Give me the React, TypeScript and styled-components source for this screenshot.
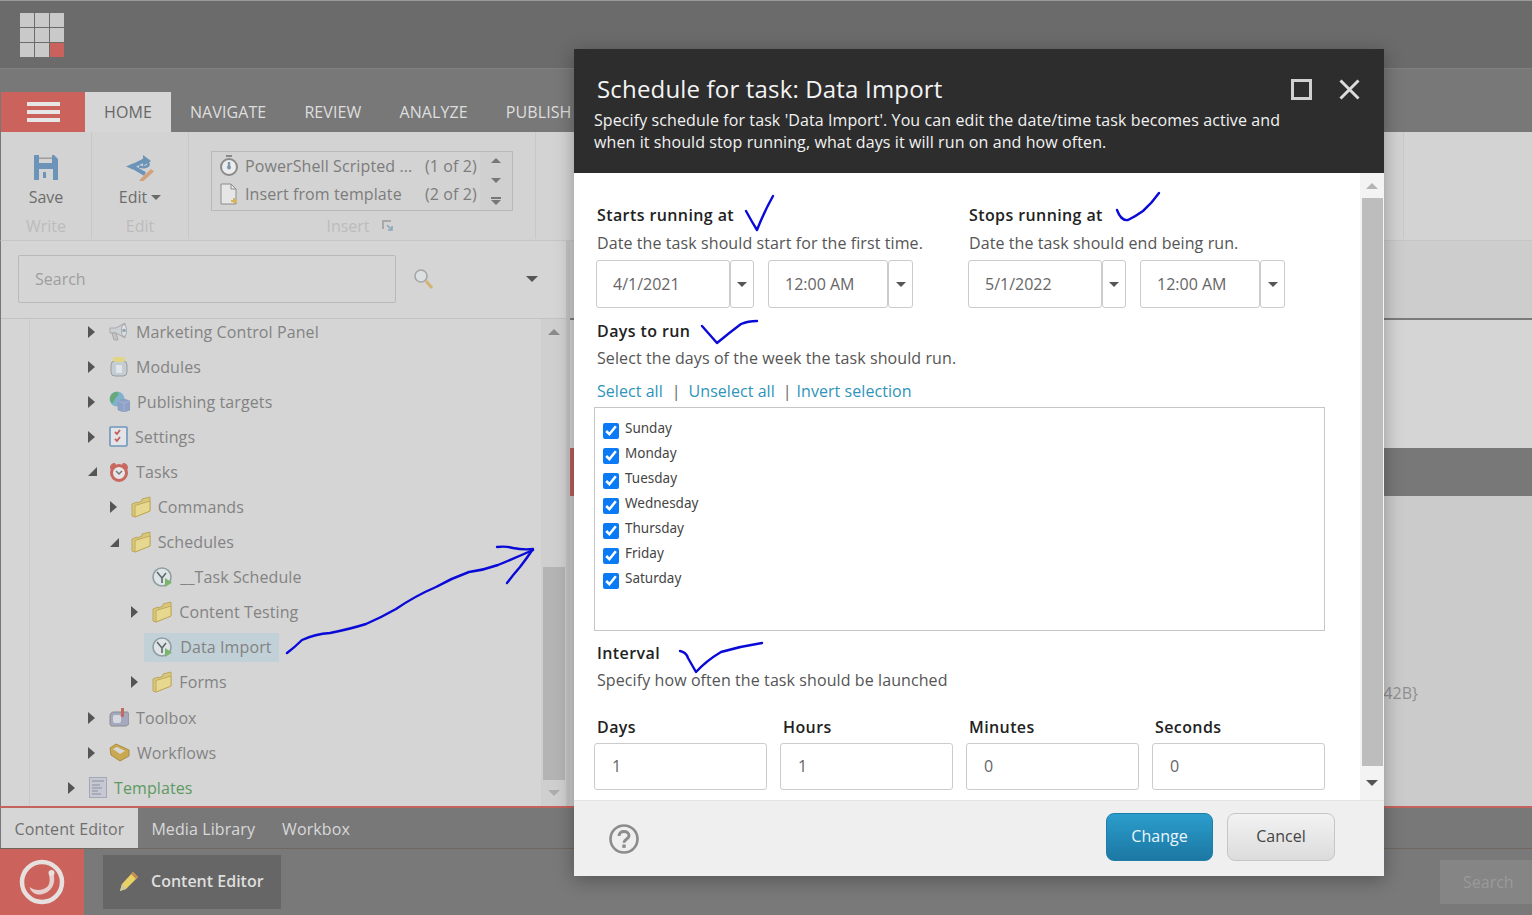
import React from "react";
import styled, { createGlobalStyle } from "styled-components";

const Global = createGlobalStyle`
  html, body { margin: 0; padding: 0; background: #787878; }
  body { font-family: "Open Sans", "Noto Sans", sans-serif; overflow: hidden; }
  * { box-sizing: border-box; }
`;

const Page = styled.div`
  position: relative;
  width: 1532px;
  height: 915px;
  overflow: hidden;
  display: flex;
  flex-direction: column;
  font-size: 16px;
`;

/* ---------- top bar ---------- */
const TopBar = styled.header`
  height: 69px;
  flex: none;
  background: #6b6b6b;
  border-top: 1px solid #9a9a9a;
  border-bottom: 1px solid #808080;
  padding: 12px 0 0 20px;
`;
const LauncherGrid = styled.div`
  display: grid;
  grid-template-columns: repeat(3, 14px);
  grid-template-rows: repeat(3, 14px);
  gap: 1px;
`;
const LauncherCell = styled.span<{ $accent?: boolean }>`
  background: ${(p) => (p.$accent ? "#c9625c" : "#c9c9c9")};
`;

/* ---------- ribbon tabs ---------- */
const TabStrip = styled.nav`
  height: 63px;
  flex: none;
  background: #787878;
  display: flex;
  align-items: flex-end;
  padding-left: 1px;
`;
const MenuButton = styled.div`
  width: 84px;
  height: 40px;
  background: #cb635c;
  display: flex;
  flex-direction: column;
  justify-content: center;
  align-items: center;
  gap: 4px;
`;
const MenuBar = styled.span`
  width: 33px;
  height: 4px;
  background: #e6e6e6;
`;
const RibbonTab = styled.div<{ $active?: boolean }>`
  height: 40px;
  display: flex;
  align-items: center;
  padding: 0 19px;
  font-size: 16px;
  letter-spacing: 0.1px;
  color: ${(p) => (p.$active ? "#666" : "#dedede")};
  background: ${(p) => (p.$active ? "#d6d6d6" : "transparent")};
`;

/* ---------- ribbon ---------- */
const Ribbon = styled.section`
  height: 109px;
  flex: none;
  background: #d3d3d3;
  border-left: 1px solid #777;
  border-bottom: 1px solid #c6c6c6;
  display: flex;
`;
const RibbonGroup = styled.div<{ $w: number }>`
  width: ${(p) => p.$w}px;
  flex: none;
  display: flex;
  flex-direction: column;
  align-items: center;
  border-right: 1px solid #c8c8c8;
  height: 107px;
`;
const RibbonBig = styled.div`
  flex: 1;
  display: flex;
  flex-direction: column;
  align-items: center;
  padding-top: 22px;
  color: #6d6d6d;
  line-height: 22px;
  gap: 5px;
`;
const GroupLabel = styled.div<{ $shift?: number }>`
  color: #bcbcbc;
  line-height: 22px;
  height: 27px;
  display: flex;
  align-items: center;
  gap: 12px;
  padding-right: ${(p) => p.$shift ?? 0}px;
`;
const Caret = styled.span<{ $size?: number; $color?: string; $up?: boolean }>`
  display: inline-block;
  width: 0;
  height: 0;
  border-left: ${(p) => p.$size ?? 5}px solid transparent;
  border-right: ${(p) => p.$size ?? 5}px solid transparent;
  ${(p) =>
    p.$up
      ? `border-bottom: ${p.$size ?? 5}px solid ${p.$color ?? "#6a6a6a"};`
      : `border-top: ${p.$size ?? 5}px solid ${p.$color ?? "#6a6a6a"};`}
`;
const EditLine = styled.span`
  display: inline-flex;
  align-items: center;
  gap: 4px;
`;
const Gallery = styled.div`
  width: 302px;
  height: 60px;
  margin: 19px 0 0 0;
  border: 1px solid #b9b9b9;
  display: flex;
`;
const GalleryList = styled.div`
  flex: 1;
  padding: 0 0 0 7px;
`;
const GalleryRow = styled.div`
  height: 28px;
  display: flex;
  align-items: center;
  color: #7c7c7c;
  letter-spacing: 0.1px;
`;
const GalleryName = styled.span`
  width: 180px;
  margin-left: 6px;
  white-space: nowrap;
`;
const GalleryArrows = styled.div`
  width: 32px;
  display: flex;
  flex-direction: column;
  align-items: center;
  justify-content: space-between;
  padding: 6px 0 5px;
  background: #d0d0d0;
`;
const MoreArrow = styled.span`
  display: flex;
  flex-direction: column;
  align-items: center;
  gap: 1px;
`;
const MoreBar = styled.span`
  width: 10px;
  height: 2px;
  background: #777;
`;
const InsertGroup = styled.div`
  flex: 1;
  display: flex;
  flex-direction: column;
  align-items: center;
`;
const Spacer = styled.div`
  flex: 1;
`;

/* ---------- main ---------- */
const Main = styled.main`
  height: 567px;
  flex: none;
  display: flex;
  border-bottom: 2px solid #c4635d;
`;
const LeftPane = styled.div`
  width: 566px;
  flex: none;
  border-left: 1px solid #777;
  background: #d5d5d5;
  display: flex;
  flex-direction: column;
`;
const SearchRow = styled.div`
  height: 78px;
  flex: none;
  display: flex;
  align-items: center;
  padding: 0 0 2px 17px;
  border-bottom: 1px solid #c2c2c2;
`;
const SearchBox = styled.div`
  width: 378px;
  height: 48px;
  border: 1px solid #b9b9b9;
  border-radius: 2px;
  display: flex;
  align-items: center;
  padding-left: 16px;
  color: #9e9e9e;
`;
const SearchIconWrap = styled.div`
  margin-left: 17px;
  display: flex;
`;
const SearchCaret = styled.div`
  margin-left: 92px;
  display: flex;
`;
const TreeWrap = styled.div`
  flex: 1;
  min-height: 0;
  display: flex;
  overflow: hidden;
`;
const Tree = styled.div`
  flex: 1;
  margin-left: 28px;
  border-left: 1px solid #cbcbcb;
  padding-top: 0;
  overflow: hidden;
`;
const TreeList = styled.div`
  margin-top: -5px;
`;
const indents = [0, 37, 57, 78.7, 100.3];
const Row = styled.div<{ $depth: number }>`
  height: 35.1px;
  display: flex;
  align-items: center;
  padding-left: ${(p) => indents[p.$depth]}px;
`;
const Expander = styled.span`
  width: 22px;
  flex: none;
  display: flex;
  align-items: center;
  padding-left: 1px;
`;
const ArrowRight = styled.span`
  width: 0;
  height: 0;
  border-top: 6px solid transparent;
  border-bottom: 6px solid transparent;
  border-left: 7px solid #555;
`;
const ArrowOpen = styled.span`
  width: 0;
  height: 0;
  border-left: 9px solid transparent;
  border-bottom: 9px solid #555;
`;
const RowBody = styled.div<{ $selected?: boolean }>`
  display: flex;
  align-items: center;
  gap: 7px;
  height: 29px;
  margin-left: ${(p) => (p.$selected ? "-8px" : "0")};
  padding: ${(p) => (p.$selected ? "0 7px 0 8px" : "0")};
  background: ${(p) => (p.$selected ? "#c1d1d7" : "transparent")};
`;
const RowText = styled.span<{ $green?: boolean }>`
  color: ${(p) => (p.$green ? "#5c9a62" : "#838383")};
  white-space: nowrap;
  letter-spacing: 0.1px;
`;
const ScrollTrack = styled.div<{ $width: number; $bg: string }>`
  width: ${(p) => p.$width}px;
  flex: none;
  display: flex;
  flex-direction: column;
  align-items: center;
  background: ${(p) => p.$bg};
`;
const ScrollEnd = styled.div<{ $h: number }>`
  height: ${(p) => p.$h}px;
  flex: none;
  display: flex;
  align-items: center;
  justify-content: center;
`;
const ScrollThumb = styled.div<{ $h: number; $bg: string }>`
  width: calc(100% - 3px);
  height: ${(p) => p.$h}px;
  flex: none;
  background: ${(p) => p.$bg};
`;
const Splitter = styled.div`
  width: 4px;
  flex: none;
  background: #c4c4c4;
`;
const RightPane = styled.div`
  flex: 1;
  display: flex;
  flex-direction: column;
  background: #cbcbcb;
`;
const EditorHead = styled.div`
  height: 79px;
  flex: none;
  background: #cdcdcd;
  border-bottom: 2px solid #7b7b7b;
`;
const EditorBlock = styled.div`
  height: 128px;
  flex: none;
  background: #d5d5d5;
`;
const EditorBand = styled.div`
  height: 48px;
  flex: none;
  background: #787878;
  border-left: 4px solid #bb5f5a;
`;
const EditorFields = styled.div`
  flex: 1;
  padding: 186px 114px 0 0;
  text-align: right;
  color: #8f8f8f;
  font-size: 16px;
  line-height: 22px;
`;

/* ---------- bottom ---------- */
const BottomTabs = styled.div`
  height: 41px;
  flex: none;
  background: #787878;
  border-bottom: 1px solid #6f675f;
  padding-left: 1px;
  display: flex;
`;
const BottomTab = styled.div<{ $active?: boolean }>`
  height: 40px;
  display: flex;
  align-items: center;
  padding: 2px 13.5px 0;
  letter-spacing: 0.1px;
  color: ${(p) => (p.$active ? "#707070" : "#d8d8d8")};
  background: ${(p) => (p.$active ? "#d6d6d6" : "transparent")};
`;
const TaskBar = styled.footer`
  flex: 1;
  background: #797979;
  display: flex;
  align-items: center;
`;
const StartTile = styled.div`
  width: 84px;
  height: 100%;
  background: #cb635c;
  display: flex;
  align-items: center;
  justify-content: center;
`;
const TaskItem = styled.div`
  margin-left: 19px;
  width: 178px;
  height: 54px;
  background: #666;
  color: #dedede;
  font-weight: 600;
  display: flex;
  align-items: center;
  padding: 0 0 2px 16px;
  gap: 12px;
`;
const TaskSearch = styled.div`
  margin-left: auto;
  width: 92px;
  height: 44px;
  margin-top: 0;
  background: #858585;
  color: #9a9a9a;
  padding-left: 23px;
  display: flex;
  align-items: center;
`;

/* ---------- dialog ---------- */
const Dialog = styled.div`
  position: absolute;
  left: 574px;
  top: 49px;
  width: 810px;
  height: 827px;
  display: flex;
  flex-direction: column;
  background: #fff;
  box-shadow: 0 4px 18px rgba(0, 0, 0, 0.3);
`;
const DialogHeader = styled.div`
  height: 124px;
  flex: none;
  background: #2d2d2d;
  color: #fff;
  padding: 24px 24px 0 20px;
`;
const TitleRow = styled.div`
  display: flex;
  align-items: center;
  height: 32px;
`;
const Title = styled.h1`
  flex: 1;
  margin: 0 0 0 3px;
  font-size: 24px;
  font-weight: 400;
  line-height: 32px;
  letter-spacing: 0.17px;
  color: #f4f4f4;
`;
const WindowButtons = styled.div`
  display: flex;
  gap: 27px;
`;
const SquareButton = styled.div`
  width: 21px;
  height: 21px;
  border: 3px solid #d0d0d0;
`;
const HeaderText = styled.p`
  margin: 4px 0 0;
  width: 700px;
  font-size: 16px;
  line-height: 22px;
  color: #f2f2f2;
  letter-spacing: 0.095px;
`;
const DialogBody = styled.div`
  flex: 1;
  min-height: 0;
  display: flex;
`;
const Form = styled.div`
  flex: 1;
  padding: 31px 35px 0 20px;
  font-size: 16px;
  line-height: 22px;
`;
const Columns = styled.div`
  display: grid;
  grid-template-columns: 372px 1fr;
  margin-left: 2px;
`;
const Heading = styled.h2<{ $inset?: number; $top?: number }>`
  margin: ${(p) => p.$top ?? 0}px 0 0 ${(p) => p.$inset ?? 3}px;
  font-size: 16px;
  font-weight: 600;
  line-height: 22px;
  letter-spacing: 0.4px;
  color: #222;
`;
const Help = styled.p<{ $inset?: number; $top?: number }>`
  margin: ${(p) => p.$top ?? 5}px 0 0 ${(p) => p.$inset ?? 3}px;
  color: #555;
  font-size: 16px;
  line-height: 22px;
  letter-spacing: 0.09px;
`;
const PickerRow = styled.div`
  display: flex;
  margin-top: 6px;
  gap: 14px;
`;
const Picker = styled.div`
  display: flex;
`;
const PickerInput = styled.input<{ $w: number }>`
  width: ${(p) => p.$w}px;
  height: 48px;
  border: 1px solid #ccc;
  border-radius: 3px;
  padding: 0 0 0 16px;
  font: 400 16px "Open Sans", sans-serif;
  color: #666;
  background: #fff;
  outline: none;
`;
const PickerButton = styled.div<{ $w: number }>`
  width: ${(p) => p.$w}px;
  height: 48px;
  border: 1px solid #ccc;
  border-radius: 3px;
  display: flex;
  align-items: center;
  justify-content: center;
`;
const LinkRow = styled.div`
  margin: 11px 0 0 3px;
  display: flex;
  height: 22px;
`;
const TextLink = styled.a`
  color: #2f94b9;
  letter-spacing: 0.05px;
`;
const Sep = styled.span<{ $l: number; $r: number }>`
  margin: 0 ${(p) => p.$r}px 0 ${(p) => p.$l}px;
  color: #666;
`;
const DayBox = styled.div`
  margin-top: 5px;
  height: 224px;
  width: 731px;
  border: 1px solid #c6c6c6;
  padding: 8px 0 0 8px;
`;
const DayRow = styled.label`
  display: flex;
  height: 25px;
  gap: 6px;
  font: 400 13.5px/24px "Noto Sans", "Open Sans", sans-serif;
  color: #444;
`;
const DayCheck = styled.input`
  width: 16px;
  height: 16px;
  margin: 7px 0 0 0;
  accent-color: #0b7bf5;
`;
const IntervalGrid = styled.div`
  display: grid;
  grid-template-columns: repeat(4, 173px);
  column-gap: 13px;
  width: 731px;
  margin-top: 25px;
`;
const IntervalLabel = styled.div`
  font-weight: 600;
  letter-spacing: 0.4px;
  color: #222;
  margin-left: 3px;
`;
const IntervalInput = styled.input`
  display: block;
  width: 173px;
  height: 47px;
  margin-top: 5px;
  border: 1px solid #ccc;
  border-radius: 3px;
  padding: 0 0 2px 17px;
  font: 400 16px "Open Sans", sans-serif;
  color: #666;
  outline: none;
`;
const DialogFooter = styled.div`
  height: 76px;
  flex: none;
  background: #efefef;
  border-top: 1px solid #e4e4e4;
  display: flex;
  align-items: center;
  padding: 0 49px 4px 35px;
`;
const HelpSlot = styled.div`
  display: flex;
  margin-top: 4px;
`;
const FootButton = styled.button<{ $primary?: boolean }>`
  width: ${(p) => (p.$primary ? 107 : 108)}px;
  height: 48px;
  border-radius: 8px;
  padding: 0 0 1px;
  margin-left: ${(p) => (p.$primary ? "auto" : "14px")};
  border: 1px solid ${(p) => (p.$primary ? "#1f7ea9" : "#c6c6c6")};
  background: ${(p) =>
    p.$primary
      ? "linear-gradient(#2b9dcc, #1c77a3)"
      : "linear-gradient(#f2f2f2, #dcdcdc)"};
  color: ${(p) => (p.$primary ? "#eaf6fb" : "#444")};
  font: 400 16px "Open Sans", sans-serif;
`;
const Annotations = styled.svg`
  position: absolute;
  inset: 0;
  width: 1532px;
  height: 915px;
  pointer-events: none;
`;

/* ---------- icons ---------- */
const SaveIcon = () => (
  <svg width="26" height="27" viewBox="0 0 26 27">
    <path d="M1 1h20l4 4v21H1z" fill="#6b94b8" />
    <rect x="6" y="1" width="13" height="8" fill="#d3d3d3" />
    <rect x="6" y="3.5" width="13" height="1.4" fill="#9a9a9a" />
    <rect x="6" y="15" width="14" height="11" fill="#d3d3d3" />
    <rect x="10" y="18" width="3" height="6" fill="#6b94b8" />
  </svg>
);
const EditIcon = () => (
  <svg width="30" height="27" viewBox="0 0 30 27">
    <path d="M18 1l8 6-8 5z" fill="#6b94b8" />
    <path d="M21 5.500L7 12.500L20 20" fill="none" stroke="#6b94b8" strokeWidth="4" />
    <path d="M20 6C27 10 23 15 14 12.500" fill="none" stroke="#6b94b8" strokeWidth="2.600" />
    <path d="M1 12.500l7-3v6z" fill="#6b94b8" />
    <path d="M15 25.500L26 15l3 2.500L18.500 27l-4 .5z" fill="#d2a27c" />
  </svg>
);
const StopwatchIcon = () => (
  <svg width="20" height="22" viewBox="0 0 20 22">
    <rect x="7" y="0" width="6" height="2" fill="#8a8a8a" />
    <circle cx="10" cy="12" r="8" fill="#ececec" stroke="#8a8a8a" strokeWidth="2" />
    <path d="M10 7v5" stroke="#7b97b0" strokeWidth="2.4" />
    <circle cx="10" cy="12.5" r="2" fill="#7b97b0" />
  </svg>
);
const DocIcon = () => (
  <svg width="20" height="22" viewBox="0 0 20 22">
    <path d="M2 1h10l5 5v15H2z" fill="#e6e6e6" stroke="#8c8c8c" />
    <path d="M12 1v5h5" fill="none" stroke="#8c8c8c" />
    <path d="M15 15v6M12 18h6" stroke="#d9b45a" strokeWidth="2" />
  </svg>
);
const MagnifierIcon = () => (
  <svg width="21" height="22" viewBox="0 0 21 22">
    <circle cx="8" cy="8" r="6" fill="#dce0e2" stroke="#a6a6a6" strokeWidth="1.6" />
    <path d="M13 13l6 7" stroke="#d5b473" strokeWidth="3" />
  </svg>
);
const LauncherIcon = () => (
  <svg width="11" height="11" viewBox="0 0 11 11">
    <path d="M1 9V1h8" fill="none" stroke="#a9a9a9" strokeWidth="2" />
    <path d="M5 5l5 5M10 6v4H6" fill="none" stroke="#8fa7b8" strokeWidth="1.6" />
  </svg>
);
const Folder = () => (
  <svg width="20" height="22" viewBox="0 0 20 22">
    <path d="M1 8l5-2v1l5-2V3l8-2v14L4 21l-3-1z" fill="#d8c878" stroke="#bda75f" />
    <path d="M4 9.500L19 5v10L4 21z" fill="#e6d98f" stroke="#c1a95f" />
  </svg>
);
const Megaphone = () => (
  <svg width="20" height="20" viewBox="0 0 20 20">
    <path d="M1 6h6l9-5v15L7 11H1z" fill="#cdd1d4" stroke="#a8a8a8" />
    <path d="M3 11l2 7h4l-2-7z" fill="#c2c4c6" stroke="#a8a8a8" />
    <ellipse cx="15" cy="8.500" rx="2.500" ry="6" fill="#e2e4e6" stroke="#a3a8ae" />
    <circle cx="15" cy="8.500" r="1.800" fill="#8ea4b8" />
  </svg>
);
const Jar = () => (
  <svg width="20" height="21" viewBox="0 0 20 21">
    <rect x="2" y="5" width="16" height="15" rx="4" fill="#c4ccd4" stroke="#9c9c9c" />
    <rect x="4" y="1" width="12" height="5" rx="2" fill="#e2d584" />
    <rect x="7" y="9" width="6" height="8" rx="1" fill="#e2e6ea" />
  </svg>
);
const GlobeCube = () => (
  <svg width="21" height="21" viewBox="0 0 21 21">
    <circle cx="8" cy="8" r="7.5" fill="#7fb2cc" />
    <path d="M1 8c0-4 3-7 7-7 2 1 2 4-1 5-1 2-2 4-3 6-2 0-3-2-3-4z" fill="#67a878" />
    <path d="M9 10l6-2 6 2v9l-6 2-6-2z" fill="#8ea2c8" stroke="#8a96b0" strokeWidth="0.6" />
    <path d="M9 10l6 2 6-2M15 12v9" fill="none" stroke="#a9b8d6" strokeWidth="0.8" />
  </svg>
);
const Checklist = () => (
  <svg width="19" height="21" viewBox="0 0 19 21">
    <rect x="1" y="1" width="17" height="19" rx="1" fill="#e2e4e8" stroke="#6e96bb" strokeWidth="1.6" />
    <path d="M6 6l2 2 3-4M6 13l2 2 3-4" fill="none" stroke="#c4605c" strokeWidth="1.8" />
  </svg>
);
const AlarmClock = () => (
  <svg width="20" height="20" viewBox="0 0 20 20">
    <path d="M1 6c0-3 2-5 5-5l1 2-5 5zM19 6c0-3-2-5-5-5l-1 2 5 5z" fill="#c9685e" />
    <circle cx="10" cy="11" r="7.500" fill="#e6e6e6" stroke="#c9685e" strokeWidth="3" />
    <path d="M7 9l3 3 3-3" fill="none" stroke="#777" strokeWidth="1.500" />
  </svg>
);
const ScheduleIcon = () => (
  <svg width="21" height="21" viewBox="0 0 21 21">
    <circle cx="10" cy="10" r="9" fill="#dfe5e6" stroke="#8f9ea3" strokeWidth="1.6" />
    <path d="M5 5l5 6 4-5M10 11v5" fill="none" stroke="#5d6a70" strokeWidth="1.6" />
    <path d="M13 11l7 4.5-7 4.5z" fill="#7bb56d" />
  </svg>
);
const MailBox = () => (
  <svg width="20" height="20" viewBox="0 0 20 20">
    <path d="M1 8c0-3 2-4 4-4h13c1 0 2 1 2 3v9l-3 2H3c-2 0-2-2-2-3z" fill="#a5a9c0" stroke="#8a8a8a" />
    <rect x="4" y="7" width="8" height="8" rx="2" fill="#d6d8e0" />
    <rect x="12" y="0" width="3" height="9" fill="#c4695f" />
  </svg>
);
const Tray = () => (
  <svg width="21" height="19" viewBox="0 0 21 19">
    <path d="M1 5L7 1l13 6v6l-9 5-9-6z" fill="#c9a850" stroke="#a88d46" />
    <path d="M4 6l4-2 8 4-5 3z" fill="#d6d6d6" />
  </svg>
);
const TemplateDoc = () => (
  <svg width="18" height="21" viewBox="0 0 18 21">
    <rect x="0.5" y="0.5" width="17" height="20" fill="#c6c9d4" stroke="#a3a7b6" />
    <path d="M3 4h12M3 8h8M3 11h10M3 14h6M3 17h9" stroke="#8b8f9c" strokeWidth="1.2" />
  </svg>
);
const Pencil = () => (
  <svg width="20" height="21" viewBox="0 0 20 21">
    <path d="M1 20l2-7L14 1l5 5L7 18z" fill="#e8d266" />
    <path d="M1 20l2-7 4 5z" fill="#cfc6a4" />
    <path d="M14 1l5 5-2 2-5-5z" fill="#c9884f" />
  </svg>
);
const SitecoreLogo = () => (
  <svg width="46" height="46" viewBox="0 0 46 46">
    <circle cx="23" cy="23" r="20" fill="none" stroke="#e6e0df" strokeWidth="4.500" />
    <path d="M34 14C38 24 32 34 22 35.500C16 36 12 33 10.500 28C16 32 24 32 29 27C31 24 31 19 30 16Z" fill="#e6cfcc" />
    <circle cx="32.500" cy="14" r="3" fill="#e6e0df" />
  </svg>
);
const CloseIcon = () => (
  <svg width="21" height="21" viewBox="0 0 21 21">
    <path d="M1.5 1.5l18 18M19.5 1.5l-18 18" stroke="#dcdcdc" strokeWidth="3" />
  </svg>
);
const HelpIcon = () => (
  <svg width="30" height="30" viewBox="0 0 30 30">
    <circle cx="15" cy="15" r="13.5" fill="none" stroke="#8c8c8c" strokeWidth="2.6" />
    <path d="M10 12c0-3 2.300-4.500 5-4.500s5 1.600 5 4.200c0 3.600-5 3.600-5 7" fill="none" stroke="#8c8c8c" strokeWidth="3" />
    <rect x="13.300" y="20.500" width="3.400" height="3.400" fill="#8c8c8c" />
  </svg>
);

type Node = { depth: number; label: string; icon: React.ReactNode; state?: "open" | "closed"; selected?: boolean; green?: boolean };
const tree: Node[] = [
  { depth: 2, label: "Marketing Control Panel", icon: <Megaphone />, state: "closed" },
  { depth: 2, label: "Modules", icon: <Jar />, state: "closed" },
  { depth: 2, label: "Publishing targets", icon: <GlobeCube />, state: "closed" },
  { depth: 2, label: "Settings", icon: <Checklist />, state: "closed" },
  { depth: 2, label: "Tasks", icon: <AlarmClock />, state: "open" },
  { depth: 3, label: "Commands", icon: <Folder />, state: "closed" },
  { depth: 3, label: "Schedules", icon: <Folder />, state: "open" },
  { depth: 4, label: "__Task Schedule", icon: <ScheduleIcon /> },
  { depth: 4, label: "Content Testing", icon: <Folder />, state: "closed" },
  { depth: 4, label: "Data Import", icon: <ScheduleIcon />, selected: true },
  { depth: 4, label: "Forms", icon: <Folder />, state: "closed" },
  { depth: 2, label: "Toolbox", icon: <MailBox />, state: "closed" },
  { depth: 2, label: "Workflows", icon: <Tray />, state: "closed" },
  { depth: 1, label: "Templates", icon: <TemplateDoc />, state: "closed", green: true },
];
const days = ["Sunday", "Monday", "Tuesday", "Wednesday", "Thursday", "Friday", "Saturday"];
const interval = [
  ["Days", "1"],
  ["Hours", "1"],
  ["Minutes", "0"],
  ["Seconds", "0"],
];

export default function App() {
  return (
    <Page>
      <Global />
      <TopBar>
        <LauncherGrid>
          {Array.from({ length: 9 }).map((_, i) => (
            <LauncherCell key={i} $accent={i === 8} />
          ))}
        </LauncherGrid>
      </TopBar>
      <TabStrip>
        <MenuButton>
          <MenuBar />
          <MenuBar />
          <MenuBar />
        </MenuButton>
        {["HOME", "NAVIGATE", "REVIEW", "ANALYZE", "PUBLISH"].map((t, i) => (
          <RibbonTab key={t} $active={i === 0}>
            {t}
          </RibbonTab>
        ))}
      </TabStrip>
      <Ribbon>
        <RibbonGroup $w={91}>
          <RibbonBig>
            <SaveIcon />
            <span>Save</span>
          </RibbonBig>
          <GroupLabel>Write</GroupLabel>
        </RibbonGroup>
        <RibbonGroup $w={97}>
          <RibbonBig>
            <EditIcon />
            <EditLine>
              Edit <Caret $size={5} />
            </EditLine>
          </RibbonBig>
          <GroupLabel>Edit</GroupLabel>
        </RibbonGroup>
        <RibbonGroup $w={347}>
          <InsertGroup>
            <Gallery>
              <GalleryList>
                <GalleryRow>
                  <StopwatchIcon />
                  <GalleryName>PowerShell Scripted ...</GalleryName>
                  <span>(1 of 2)</span>
                </GalleryRow>
                <GalleryRow>
                  <DocIcon />
                  <GalleryName>Insert from template</GalleryName>
                  <span>(2 of 2)</span>
                </GalleryRow>
              </GalleryList>
              <GalleryArrows>
                <Caret $up $size={5} $color="#777" />
                <Caret $size={5} $color="#777" />
                <MoreArrow>
                  <MoreBar />
                  <Caret $size={5} $color="#777" />
                </MoreArrow>
              </GalleryArrows>
            </Gallery>
            <Spacer />
            <GroupLabel $shift={5}>
              Insert <LauncherIcon />
            </GroupLabel>
          </InsertGroup>
        </RibbonGroup>
        <RibbonGroup $w={868} />
      </Ribbon>
      <Main>
        <LeftPane>
          <SearchRow>
            <SearchBox>Search</SearchBox>
            <SearchIconWrap>
              <MagnifierIcon />
            </SearchIconWrap>
            <SearchCaret>
              <Caret $size={6.5} $color="#555" />
            </SearchCaret>
          </SearchRow>
          <TreeWrap>
            <Tree>
              <TreeList>
                {tree.map((n) => (
                  <Row key={n.label} $depth={n.depth}>
                    <Expander>
                      {n.state === "closed" && <ArrowRight />}
                      {n.state === "open" && <ArrowOpen />}
                    </Expander>
                    <RowBody $selected={n.selected}>
                      {n.icon}
                      <RowText $green={n.green}>{n.label}</RowText>
                    </RowBody>
                  </Row>
                ))}
              </TreeList>
            </Tree>
            <ScrollTrack $width={25} $bg="#cfcfcf">
              <ScrollEnd $h={26}>
                <Caret $up $size={6} $color="#8a8a8a" />
              </ScrollEnd>
              <Spacer />
              <ScrollThumb $h={213} $bg="#b4b4b4" />
              <ScrollEnd $h={26}>
                <Caret $size={6} $color="#adadad" />
              </ScrollEnd>
            </ScrollTrack>
          </TreeWrap>
        </LeftPane>
        <Splitter />
        <RightPane>
          <EditorHead />
          <EditorBlock />
          <EditorBand />
          <EditorFields>{"42B}"}</EditorFields>
        </RightPane>
      </Main>
      <BottomTabs>
        <BottomTab $active>Content Editor</BottomTab>
        <BottomTab>Media Library</BottomTab>
        <BottomTab>Workbox</BottomTab>
      </BottomTabs>
      <TaskBar>
        <StartTile>
          <SitecoreLogo />
        </StartTile>
        <TaskItem>
          <Pencil />
          Content Editor
        </TaskItem>
        <TaskSearch>Search</TaskSearch>
      </TaskBar>

      <Dialog>
        <DialogHeader>
          <TitleRow>
            <Title>Schedule for task: Data Import</Title>
            <WindowButtons>
              <SquareButton />
              <CloseIcon />
            </WindowButtons>
          </TitleRow>
          <HeaderText>
            Specify schedule for task 'Data Import'. You can edit the date/time task becomes active and when it should
            stop running, what days it will run on and how often.
          </HeaderText>
        </DialogHeader>
        <DialogBody>
          <Form>
            <Columns>
              <div>
                <Heading $inset={1}>Starts running at</Heading>
                <Help $inset={1} $top={6}>
                  Date the task should start for the first time.
                </Help>
                <PickerRow>
                  <Picker>
                    <PickerInput $w={134} defaultValue="4/1/2021" readOnly />
                    <PickerButton $w={24}>
                      <Caret $size={5} $color="#555" />
                    </PickerButton>
                  </Picker>
                  <Picker>
                    <PickerInput $w={120} defaultValue="12:00 AM" readOnly />
                    <PickerButton $w={25}>
                      <Caret $size={5} $color="#555" />
                    </PickerButton>
                  </Picker>
                </PickerRow>
              </div>
              <div>
                <Heading $inset={1}>Stops running at</Heading>
                <Help $inset={1} $top={6}>
                  Date the task should end being run.
                </Help>
                <PickerRow>
                  <Picker>
                    <PickerInput $w={134} defaultValue="5/1/2022" readOnly />
                    <PickerButton $w={24}>
                      <Caret $size={5} $color="#555" />
                    </PickerButton>
                  </Picker>
                  <Picker>
                    <PickerInput $w={120} defaultValue="12:00 AM" readOnly />
                    <PickerButton $w={25}>
                      <Caret $size={5} $color="#555" />
                    </PickerButton>
                  </Picker>
                </PickerRow>
              </div>
            </Columns>
            <Heading $top={12}>Days to run</Heading>
            <Help>Select the days of the week the task should run.</Help>
            <LinkRow>
              <TextLink>Select all</TextLink>
              <Sep $l={9} $r={8}>
                |
              </Sep>
              <TextLink>Unselect all</TextLink>
              <Sep $l={8} $r={5}>
                |
              </Sep>
              <TextLink>Invert selection</TextLink>
            </LinkRow>
            <DayBox>
              {days.map((d) => (
                <DayRow key={d}>
                  <DayCheck type="checkbox" defaultChecked />
                  {d}
                </DayRow>
              ))}
            </DayBox>
            <Heading $top={11}>Interval</Heading>
            <Help>Specify how often the task should be launched</Help>
            <IntervalGrid>
              {interval.map(([label, value]) => (
                <div key={label}>
                  <IntervalLabel>{label}</IntervalLabel>
                  <IntervalInput defaultValue={value} readOnly />
                </div>
              ))}
            </IntervalGrid>
          </Form>
          <ScrollTrack $width={24} $bg="#f3f3f3">
            <ScrollEnd $h={25}>
              <Caret $up $size={6} $color="#b4b4b4" />
            </ScrollEnd>
            <ScrollThumb $h={568} $bg="#bdbdbd" />
            <Spacer />
            <ScrollEnd $h={34}>
              <Caret $size={6} $color="#555" />
            </ScrollEnd>
          </ScrollTrack>
        </DialogBody>
        <DialogFooter>
          <HelpSlot>
            <HelpIcon />
          </HelpSlot>
          <FootButton $primary>Change</FootButton>
          <FootButton>Cancel</FootButton>
        </DialogFooter>
      </Dialog>

      <Annotations viewBox="0 0 1532 915" fill="none" stroke="#0a0ad8" strokeWidth="2.4" strokeLinecap="round" strokeLinejoin="round">
        <path d="M746 211 Q752 222 757 230 Q764 212 773 196" />
        <path d="M1117 210 Q1121 221 1128 220 Q1136 216 1143 211 Q1152 203 1159 193" />
        <path d="M702 326 Q710 335 717 343 Q729 333 741 324 Q748 321 757 321" />
        <path d="M680 651 Q686 652 688 658 L696 672 Q706 661 721 652 Q742 646 762 643" />
        <path d="M287 653 Q295 647 302 640 Q315 634 330 633 Q350 629 366 624 Q382 617 396 609 Q415 596 436 587 Q452 578 469 572 Q484 570 498 565 Q515 558 533 550" />
        <path d="M497 547 Q507 546 513 548 Q523 550 533 549 Q527 558 520 567 Q513 575 507 583" />
      </Annotations>
    </Page>
  );
}
